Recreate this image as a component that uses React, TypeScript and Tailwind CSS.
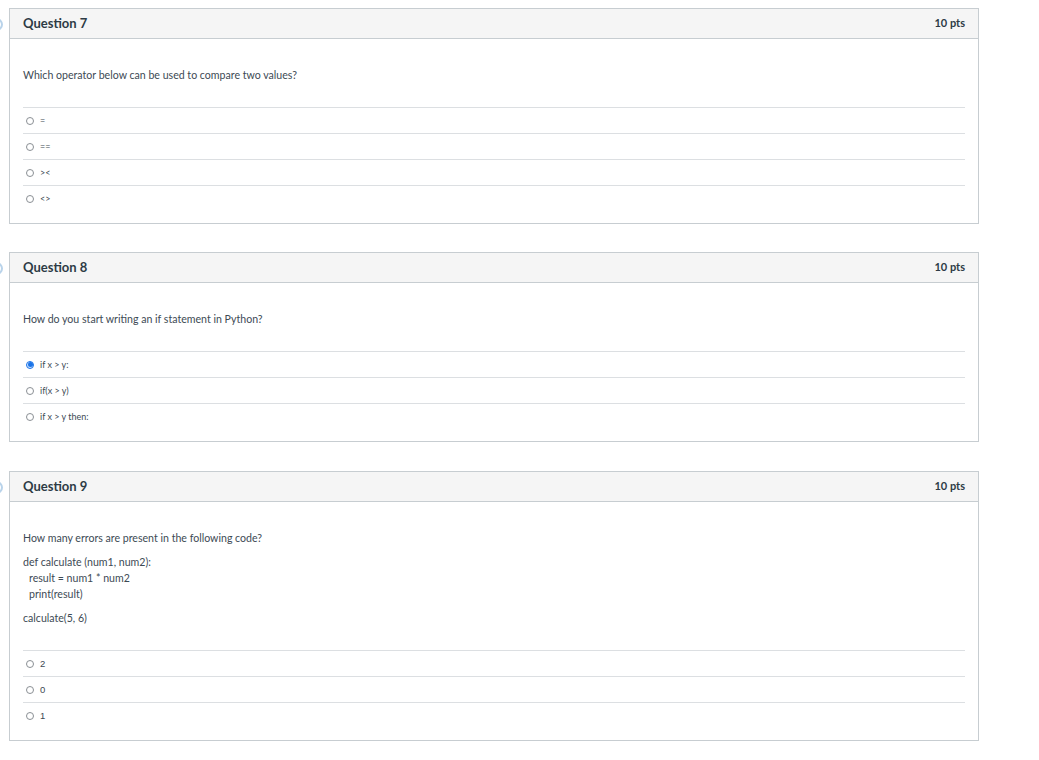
import React from "react";

type Answer = { text: string; checked?: boolean; arial?: boolean };

function Radio({ checked }: { checked?: boolean }) {
  if (checked) {
    return (
      <span className="flex h-[8px] w-[8px] shrink-0 items-center justify-center rounded-full border border-[#1a73e8] bg-[#d6e6fb]">
        <span className="h-[5px] w-[5px] rounded-full bg-[#1a73e8]" />
      </span>
    );
  }
  return <span className="h-[8px] w-[8px] shrink-0 rounded-full border border-[#8a8f94] bg-white" />;
}

function AnswerRow({ a }: { a: Answer }) {
  return (
    <div className="flex h-[26px] items-center gap-[6px] border-t border-[#dcdfe2] pl-[3px]">
      <Radio checked={a.checked} />
      <span
        className={
          a.arial
            ? "text-[9.5px] leading-none text-[#3d4a54] [font-family:'Liberation_Sans',Arial,sans-serif]"
            : "text-[9px] leading-none text-[#3d4a54]"
        }
      >
        {a.text}
      </span>
    </div>
  );
}

function Card({
  title,
  children,
  answers,
}: {
  title: string;
  children: React.ReactNode;
  answers: Answer[];
}) {
  return (
    <div className="relative">
      <span className="absolute left-[-19px] top-[10px] h-[13px] w-[13px] rounded-full border-2 border-[#b9d3ea]" />
      <div className="w-[970px] border border-[#c7cdd1] bg-white">
        <div className="flex h-[30px] items-center justify-between border-b border-[#c7cdd1] bg-[#f5f5f5] pl-[13px] pr-[13px]">
          <span className="text-[13px] font-bold text-[#2d3b45]">{title}</span>
          <span className="text-[11px] font-bold text-[#2d3b45]">10 pts</span>
        </div>
        <div className="px-[13px] pb-[12px] pt-[28px]">
          {children}
          <div className="mt-[24px]">
            {answers.map((a, i) => (
              <AnswerRow key={i} a={a} />
            ))}
          </div>
        </div>
      </div>
    </div>
  );
}

export default function App() {
  return (
    <div className="min-h-[760px] bg-white pl-[9px] pt-[8px] text-[#3d4a54] [font-family:Lato,'Noto_Sans',sans-serif]">
      <div className="flex flex-col">
        <Card
          title="Question 7"
          answers={[{ text: "=" }, { text: "==" }, { text: "><" }, { text: "<>" }]}
        >
          <p className="text-[10.6px] leading-[16px]">Which operator below can be used to compare two values?</p>
        </Card>
        <div className="h-[28px]" />
        <Card
          title="Question 8"
          answers={[{ text: "if x > y:", checked: true }, { text: "if(x > y)" }, { text: "if x > y then:" }]}
        >
          <p className="text-[10.6px] leading-[16px]">How do you start writing an if statement in Python?</p>
        </Card>
        <div className="h-[29px]" />
        <Card
          title="Question 9"
          answers={[
            { text: "2", arial: true },
            { text: "0", arial: true },
            { text: "1", arial: true },
          ]}
        >
          <p className="text-[10.6px] leading-[16px]">How many errors are present in the following code?</p>
          <div className="mt-[8px] text-[10.6px] leading-[16px]">
            <div>def calculate (num1, num2):</div>
            <div className="pl-[6px]">result = num1 * num2</div>
            <div className="pl-[6px]">print(result)</div>
          </div>
          <p className="mt-[8px] text-[10.6px] leading-[16px]">calculate(5, 6)</p>
        </Card>
      </div>
    </div>
  );
}
